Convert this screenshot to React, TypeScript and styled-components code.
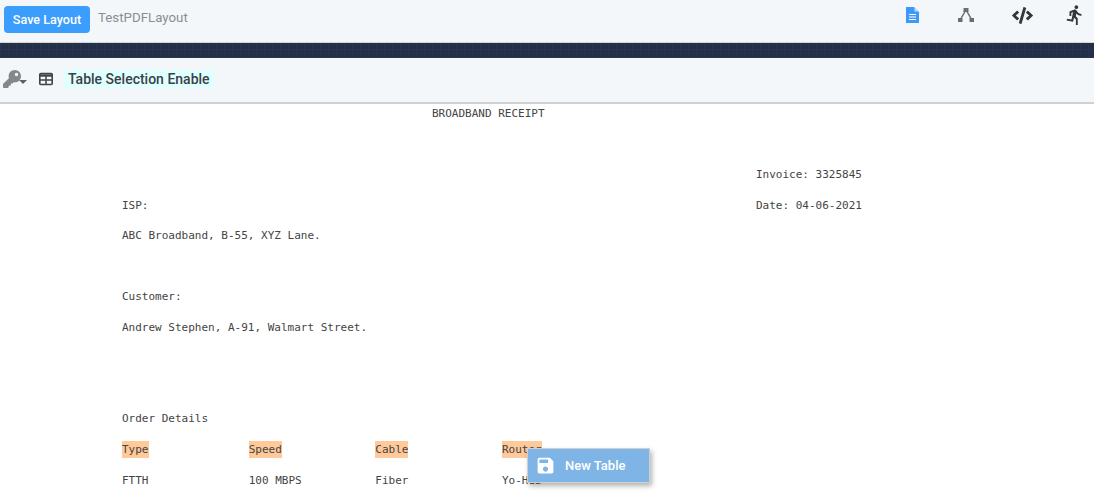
import React from "react";
import styled, { createGlobalStyle } from "styled-components";
import { MdDirectionsRun, MdSave } from "react-icons/md";
import { FaCode, FaKey } from "react-icons/fa";

const Global = createGlobalStyle`
  html, body { margin: 0; padding: 0; height: 501px; overflow: hidden; background: #fff; }
  * { box-sizing: border-box; }
`;

const Page = styled.div`
  position: relative;
  width: 1094px;
  height: 501px;
  overflow: hidden;
  font-family: Roboto, "Liberation Sans", sans-serif;
`;

const TopBar = styled.header`
  height: 43px;
  background: #f3f7fa;
  border-bottom: 1px solid #d4d6d8;
  display: flex;
  align-items: flex-start;
  padding: 6px 4px 0 4px;
`;

const SaveButton = styled.button`
  width: 86px;
  height: 27px;
  border: 0;
  border-radius: 4px;
  background: #3b9dfc;
  color: #fff;
  font: 500 12.6px Roboto, sans-serif;
  padding: 0;
`;

const LayoutName = styled.span`
  margin-left: 8px;
  margin-top: 3px;
  font-size: 13.3px;
  line-height: 17px;
  color: #8b8d90;
`;

const TopIcons = styled.div`
  margin-left: auto;
  display: flex;
  align-items: center;
  height: 18px;
`;

const IconSlot = styled.span<{ $gap: number; $color: string }>`
  display: flex;
  justify-content: center;
  align-items: center;
  width: 30px;
  margin-left: ${(p) => p.$gap}px;
  color: ${(p) => p.$color};
`;

const Band = styled.div`
  height: 15px;
  background-color: #243048;
  background-image:
    repeating-linear-gradient(90deg, #2a3650 0 1px, transparent 1px 8px),
    repeating-linear-gradient(0deg, #2a3650 0 1px, transparent 1px 8px);
`;

const ToolBar = styled.div`
  height: 46px;
  background: #f3f7fa;
  border-bottom: 2px solid #cfd1d3;
  display: flex;
  align-items: center;
  padding: 0 0 2px 3px;
`;

const KeyGroup = styled.span`
  display: flex;
  align-items: center;
  color: #85878a;
  width: 36px;
`;

const Caret = styled.span`
  width: 0;
  height: 0;
  margin: 5px 0 0 -2px;
  border-left: 4.5px solid transparent;
  border-right: 4.5px solid transparent;
  border-top: 4px solid #5d6066;
`;

const Highlight = styled.span`
  margin-left: 11px;
  padding: 0 4px;
  height: 18px;
  line-height: 18px;
  width: 150px;
  white-space: nowrap;
  background: #e0ffff;
  color: #3c4048;
  font-size: 14px;
  font-weight: 500;
`;

const Doc = styled.main`
  padding: 1px 0 0 122px;
  font-family: "DejaVu Sans Mono", monospace;
  font-size: 11px;
  color: #444;
`;

const Line = styled.div<{ $indent?: number }>`
  height: 30.55px;
  line-height: 18px;
  white-space: pre;
  padding-left: ${(p) => p.$indent ?? 0}px;
`;

const SplitLine = styled(Line)`
  display: grid;
  grid-template-columns: 634px auto;
`;

const TableRow = styled(Line)`
  display: grid;
  grid-template-columns: repeat(4, 126.67px);
  justify-content: start;
`;

const Head = styled.span`
  justify-self: start;
  height: 17px;
  line-height: 17px;
  background: #ffc999;
`;

const NewTable = styled.button`
  position: absolute;
  left: 527px;
  top: 448px;
  width: 123px;
  height: 35px;
  display: flex;
  align-items: center;
  padding: 0 0 0 7px;
  border: 1px solid #cfcfcf;
  background: #7eb4e6;
  color: #fff;
  font: 500 13px Roboto, sans-serif;
  box-shadow: 2px 3px 5px rgba(0, 0, 0, 0.3);
`;

const NewTableLabel = styled.span`
  margin-left: 9px;
`;

const DocIcon = () => (
  <svg width="13" height="16" viewBox="0 0 13 16">
    <path d="M0 0h8l5 5v11H0z" fill="#3f97fb" />
    <path d="M8.5 0L13 4.5H8.5z" fill="#bcdcfd" />
    <path d="M3 7.5h7M3 10h7M3 12.5h7" stroke="#fff" strokeWidth="1.2" />
  </svg>
);

const NodesIcon = () => (
  <svg width="16" height="14" viewBox="0 0 16 14" fill="#6b6d70">
    <rect x="5.5" y="0" width="5" height="4" />
    <rect x="0" y="10" width="4.5" height="4" />
    <rect x="11.5" y="10" width="4.5" height="4" />
    <path d="M7 3.5 L3 10.5" stroke="#6b6d70" strokeWidth="1.5" />
    <path d="M9 3.5 L13 10.5" stroke="#6b6d70" strokeWidth="1.5" />
  </svg>
);

const TableIcon = () => (
  <svg width="14" height="14" viewBox="0 0 14 14">
    <rect x="0.8" y="1.5" width="12.4" height="11" rx="1" fill="none" stroke="#3f4248" strokeWidth="1.6" />
    <path d="M0.8 3.5h12.4" stroke="#3f4248" strokeWidth="2.4" />
    <path d="M0.8 8h12.4M7 4v8" stroke="#3f4248" strokeWidth="1.5" />
  </svg>
);

export default function App() {
  return (
    <Page>
      <Global />
      <TopBar>
        <SaveButton>Save Layout</SaveButton>
        <LayoutName>TestPDFLayout</LayoutName>
        <TopIcons>
          <IconSlot $gap={0} $color="#3f97fb"><DocIcon /></IconSlot>
          <IconSlot $gap={24} $color="#6b6d70"><NodesIcon /></IconSlot>
          <IconSlot $gap={26} $color="#33363c"><FaCode size={21} /></IconSlot>
          <IconSlot $gap={23} $color="#33363c"><MdDirectionsRun size={22} /></IconSlot>
        </TopIcons>
      </TopBar>
      <Band />
      <ToolBar>
        <KeyGroup>
          <FaKey size={18} />
          <Caret />
        </KeyGroup>
        <TableIcon />
        <Highlight>Table Selection Enable</Highlight>
      </ToolBar>
      <Doc>
        <Line $indent={310}>BROADBAND RECEIPT</Line>
        <Line />
        <SplitLine><span /><span>Invoice: 3325845</span></SplitLine>
        <SplitLine><span>ISP:</span><span>Date: 04-06-2021</span></SplitLine>
        <Line>ABC Broadband, B-55, XYZ Lane.</Line>
        <Line />
        <Line>Customer:</Line>
        <Line>Andrew Stephen, A-91, Walmart Street.</Line>
        <Line />
        <Line />
        <Line>Order Details</Line>
        <TableRow>
          <Head>Type</Head><Head>Speed</Head><Head>Cable</Head><Head>Router</Head>
        </TableRow>
        <TableRow>
          <span>FTTH</span><span>100 MBPS</span><span>Fiber</span><span>Yo-Hub</span>
        </TableRow>
      </Doc>
      <NewTable>
        <MdSave size={21} />
        <NewTableLabel>New Table</NewTableLabel>
      </NewTable>
    </Page>
  );
}
